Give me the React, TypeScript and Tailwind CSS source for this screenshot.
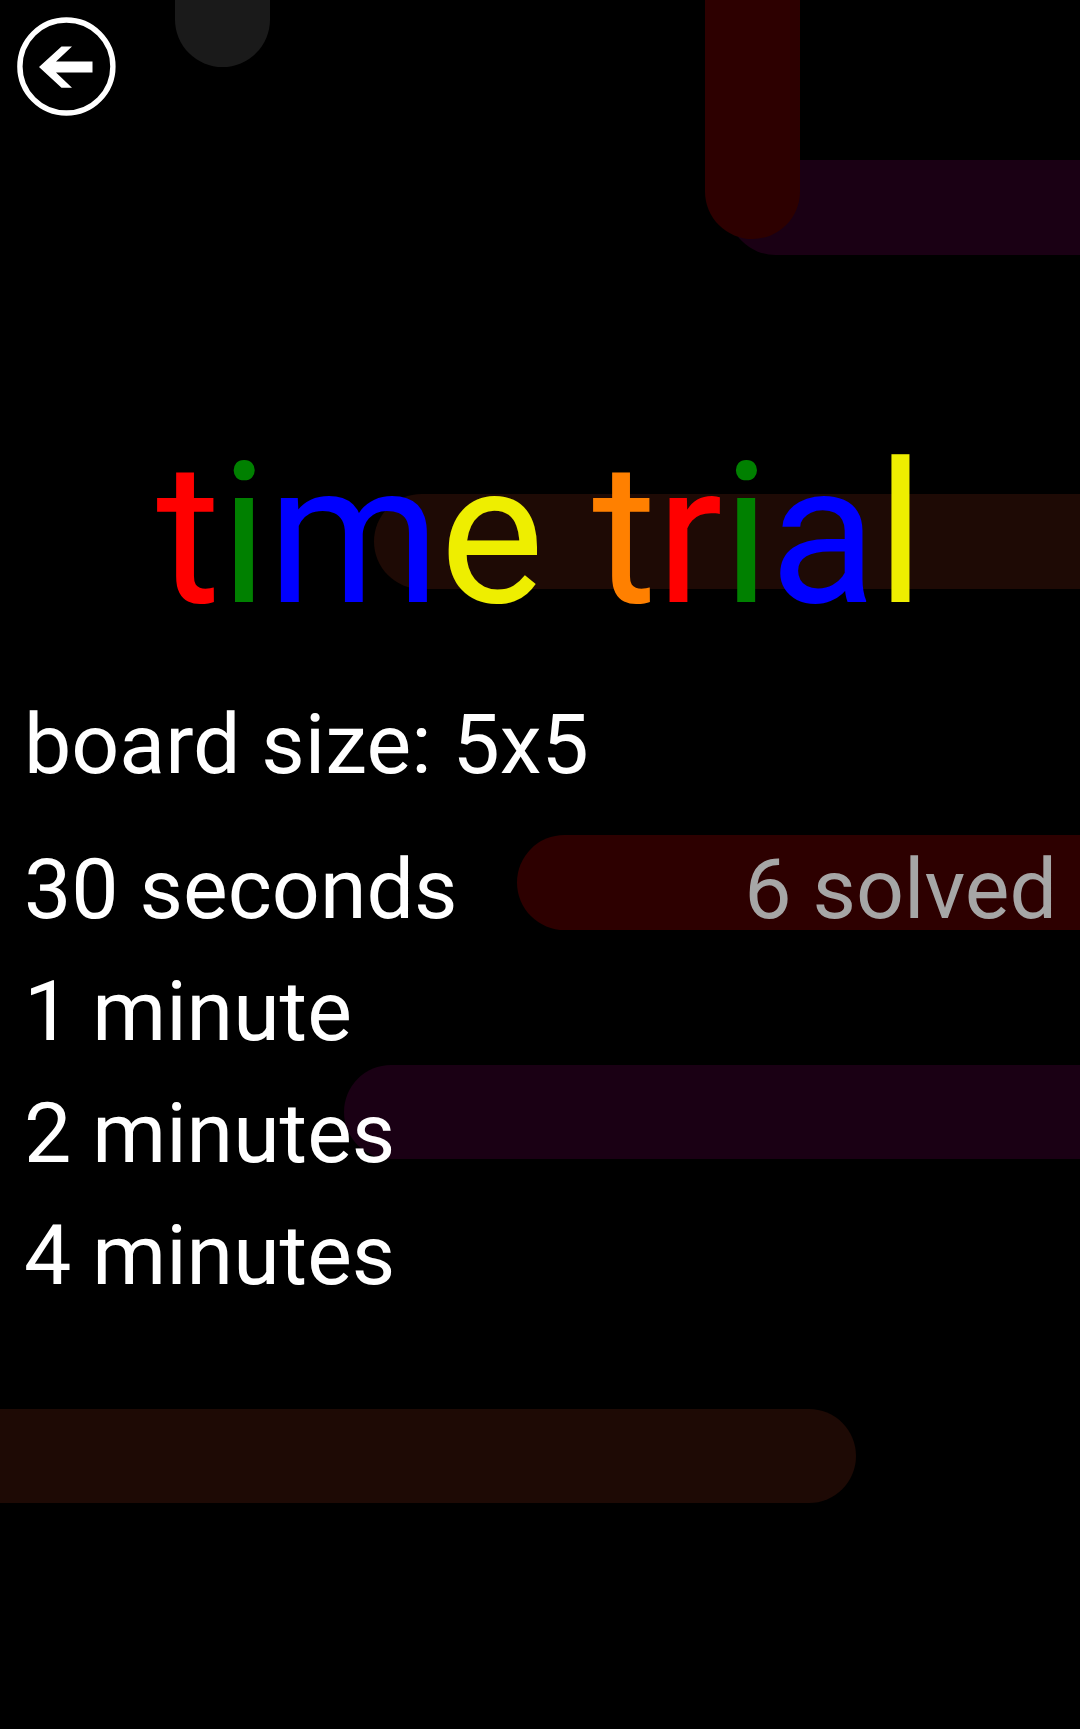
const titleLetters = [
  { ch: "t", color: "text-[#ff0000]" },
  { ch: "i", color: "text-[#008000]" },
  { ch: "m", color: "text-[#0000ff]" },
  { ch: "e", color: "text-[#eeee00]" },
  { ch: " ", color: "" },
  { ch: "t", color: "text-[#ff8000]" },
  { ch: "r", color: "text-[#ff0000]" },
  { ch: "i", color: "text-[#008000]" },
  { ch: "a", color: "text-[#0000ff]" },
  { ch: "l", color: "text-[#eeee00]" },
];

const times = [
  { label: "30 seconds", solved: "6 solved" },
  { label: "1 minute" },
  { label: "2 minutes" },
  { label: "4 minutes" },
];

function BackIcon() {
  return (
    <svg width="120" height="120" viewBox="0 0 120 120">
      <circle cx="66.4" cy="66.5" r="46.5" fill="none" stroke="#fff" strokeWidth="5.4" />
      <path d="M39 67 L61.5 46.5 H72 L56 61.5 H92.5 V72.5 H56 L72 87.7 H61.5 Z" fill="#fff" />
    </svg>
  );
}

export default function App() {
  return (
    <div className="relative h-[1729px] w-[1080px] overflow-hidden bg-black font-['Roboto',sans-serif] text-white">
      {/* faded pipes behind the menu */}
      <div className="absolute left-[175px] top-[-40px] h-[107px] w-[95px] rounded-b-[48px] bg-[#1a1a1a]" />
      <div className="absolute left-[728px] top-[160px] h-[95px] w-[352px] rounded-l-[48px] bg-[#1a0014]" />
      <div className="absolute left-[705px] top-[-40px] h-[279px] w-[95px] rounded-b-[48px] bg-[#2d0000]" />
      <div className="absolute left-[374px] top-[494px] h-[95px] w-[706px] rounded-l-[48px] bg-[#1e0a05]" />
      <div className="absolute left-[517px] top-[835px] h-[95px] w-[563px] rounded-l-[48px] bg-[#2d0000]" />
      <div className="absolute left-[344px] top-[1065px] h-[94px] w-[736px] rounded-l-[48px] bg-[#1a0014]" />
      <div className="absolute left-0 top-[1409px] h-[94px] w-[856px] rounded-r-[48px] bg-[#1e0a05]" />

      <div className="relative">
        <BackIcon />
        <h1 className="mt-[315px] text-center text-[197px] font-normal leading-[200px] tracking-[-0.5px]">
          {titleLetters.map((l, i) => (
            <span key={i} className={l.color}>{l.ch}</span>
          ))}
        </h1>
        <div className="pl-[24px] pr-[23px] pt-[49px]">
          <p className="text-[84.25px] leading-[122px]">board size: 5x5</p>
          <ul className="mt-[23px]">
            {times.map((t) => (
              <li key={t.label} className="flex h-[122px] items-center justify-between text-[84.25px]">
                <span>{t.label}</span>
                {t.solved && <span className="text-[#a6a6a6]">{t.solved}</span>}
              </li>
            ))}
          </ul>
        </div>
      </div>
    </div>
  );
}
